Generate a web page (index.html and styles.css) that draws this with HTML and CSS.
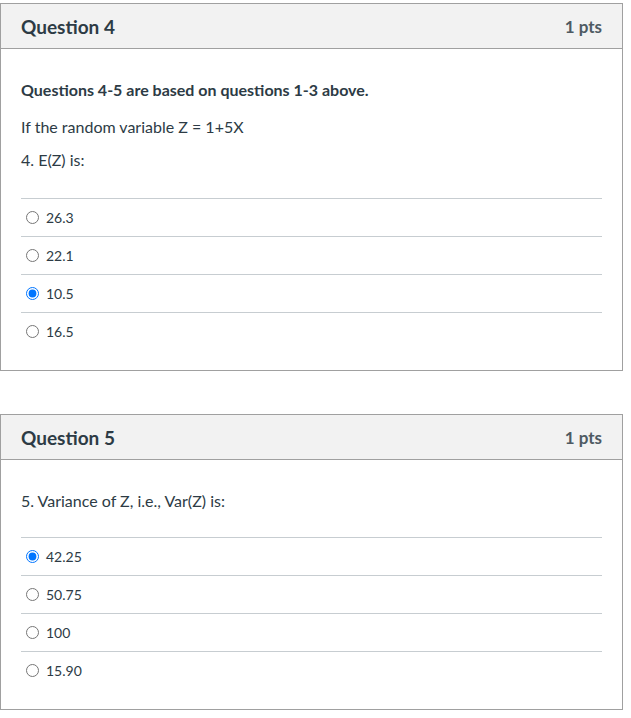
FILE: index.html
```html
<!DOCTYPE html>
<html>
<head>
<meta charset="utf-8">
<link rel="stylesheet" href="styles.css">
</head>
<body>
<div class="card">
  <div class="card-header">
    <span class="q-title">Question 4</span>
    <span class="q-pts">1 pts</span>
  </div>
  <div class="card-body">
    <p class="q-bold">Questions 4-5 are based on questions 1-3 above.</p>
    <p class="q-line">If the random variable Z = 1+5X</p>
    <p class="q-line q-last">4. E(Z) is:</p>
    <div class="answers">
      <label class="answer"><input type="radio" name="q4"><span>26.3</span></label>
      <label class="answer"><input type="radio" name="q4"><span>22.1</span></label>
      <label class="answer"><input type="radio" name="q4" checked><span>10.5</span></label>
      <label class="answer"><input type="radio" name="q4"><span>16.5</span></label>
    </div>
  </div>
</div>
<div class="card card-second">
  <div class="card-header">
    <span class="q-title">Question 5</span>
    <span class="q-pts">1 pts</span>
  </div>
  <div class="card-body">
    <p class="q-line q-last2">5. Variance of Z, i.e., Var(Z) is:</p>
    <div class="answers">
      <label class="answer"><input type="radio" name="q5" checked><span>42.25</span></label>
      <label class="answer"><input type="radio" name="q5"><span>50.75</span></label>
      <label class="answer"><input type="radio" name="q5"><span>100</span></label>
      <label class="answer"><input type="radio" name="q5"><span>15.90</span></label>
    </div>
  </div>
</div>
</body>
</html>
```
FILE: styles.css
```css
html, body {
  margin: 0;
  padding: 0;
  background: #fff;
}
body {
  font-family: Lato, "Liberation Sans", sans-serif;
  color: #2d3b45;
  font-size: 16px;
  padding-top: 3px;
}
.card {
  width: 621px;
  border: 1px solid #a0a0a0;
  background: #fff;
}
.card-second {
  margin-top: 43px;
}
.card-header {
  height: 44px;
  background: #f2f2f2;
  border-bottom: 1px solid #a0a0a0;
  display: flex;
  align-items: center;
  justify-content: space-between;
  padding: 0 20px;
}
.q-title {
  font-size: 19px;
  font-weight: 700;
}
.q-pts {
  font-size: 17px;
  font-weight: 700;
  color: #4e5a63;
}
.card-body {
  padding: 31px 20px 20px 20px;
}
.card-body p {
  margin: 0;
  line-height: 20px;
}
.q-bold {
  font-weight: 700;
  margin-bottom: 17px !important;
}
.q-line {
  margin-bottom: 13px !important;
}
.q-last {
  margin-bottom: 28px !important;
}
.q-last2 {
  margin-bottom: 26px !important;
}
.answers {
  display: flex;
  flex-direction: column;
}
.answer {
  display: flex;
  align-items: center;
  height: 37px;
  border-top: 1px solid #c7cdd1;
  font-size: 14px;
}
.answer input {
  margin: 0 7px 0 5px;
  width: 13px;
  height: 13px;
}
.answer span {
  line-height: 20px;
}
```
